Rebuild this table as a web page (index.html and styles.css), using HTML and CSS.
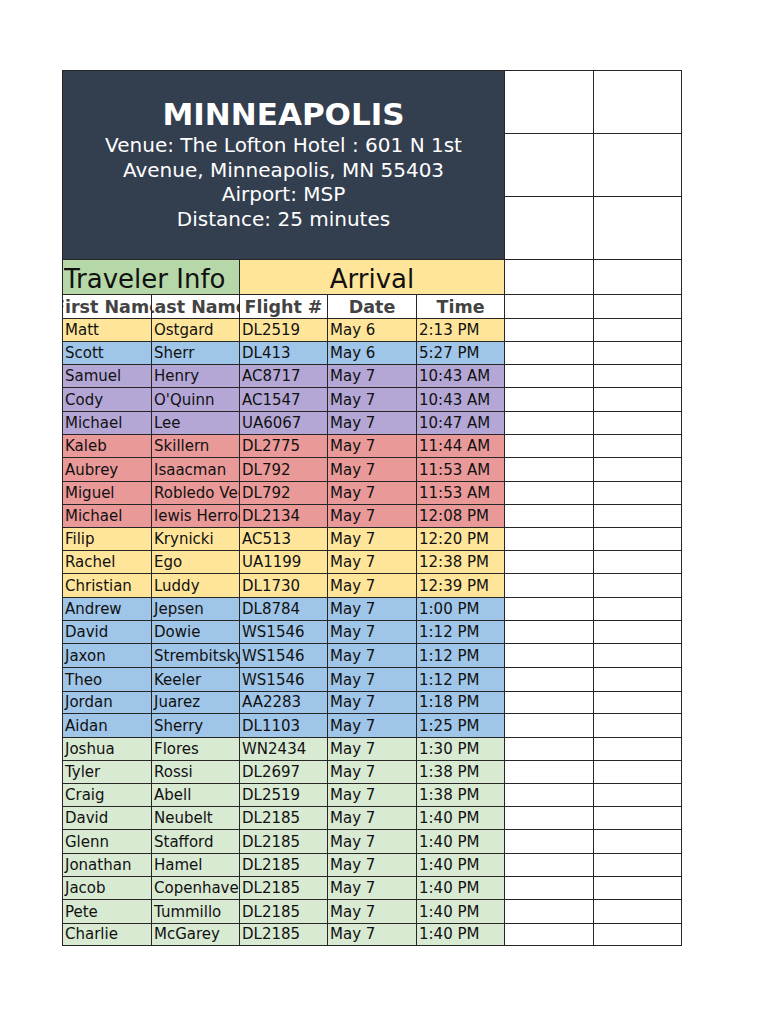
FILE: index.html
```html
<!DOCTYPE html>
<html>
<head>
<meta charset="utf-8">
<link rel="stylesheet" href="styles.css">
</head>
<body>
<div class="page">
<table class="sheet">
<colgroup>
<col class="c1"><col class="c2"><col class="c3"><col class="c4"><col class="c5"><col class="c6"><col class="c7">
</colgroup>
<tbody>
<tr class="hrow">
<td class="title" colspan="5" rowspan="3">
<div class="city">MINNEAPOLIS</div>
<div class="info">Venue: The Lofton Hotel : 601 N 1st<br>Avenue, Minneapolis, MN 55403<br>Airport: MSP<br>Distance: 25 minutes</div>
</td>
<td></td><td></td>
</tr>
<tr class="hrow"><td></td><td></td></tr>
<tr class="hrow"><td></td><td></td></tr>
<tr class="grp">
<td colspan="2" class="trav"><div class="clip">Traveler Info</div></td>
<td colspan="3" class="arr">Arrival</td>
<td></td><td></td>
</tr>
<tr class="cols">
<td><div class="clipc"><span>First Name</span></div></td>
<td><div class="clipc"><span>Last Name</span></div></td>
<td><div class="clipc"><span>Flight #</span></div></td>
<td><div class="clipc"><span>Date</span></div></td>
<td><div class="clipc"><span>Time</span></div></td>
<td></td><td></td>
</tr>
<tr class="d y"><td>Matt</td><td>Ostgard</td><td>DL2519</td><td>May 6</td><td>2:13 PM</td><td></td><td></td></tr>
<tr class="d b"><td>Scott</td><td>Sherr</td><td>DL413</td><td>May 6</td><td>5:27 PM</td><td></td><td></td></tr>
<tr class="d p"><td>Samuel</td><td>Henry</td><td>AC8717</td><td>May 7</td><td>10:43 AM</td><td></td><td></td></tr>
<tr class="d p h24"><td>Cody</td><td>O'Quinn</td><td>AC1547</td><td>May 7</td><td>10:43 AM</td><td></td><td></td></tr>
<tr class="d p"><td>Michael</td><td>Lee</td><td>UA6067</td><td>May 7</td><td>10:47 AM</td><td></td><td></td></tr>
<tr class="d r"><td>Kaleb</td><td>Skillern</td><td>DL2775</td><td>May 7</td><td>11:44 AM</td><td></td><td></td></tr>
<tr class="d r h24"><td>Aubrey</td><td>Isaacman</td><td>DL792</td><td>May 7</td><td>11:53 AM</td><td></td><td></td></tr>
<tr class="d r"><td>Miguel</td><td><div class="clip">Robledo Vega</div></td><td>DL792</td><td>May 7</td><td>11:53 AM</td><td></td><td></td></tr>
<tr class="d r"><td>Michael</td><td><div class="clip">lewis Herrod</div></td><td>DL2134</td><td>May 7</td><td>12:08 PM</td><td></td><td></td></tr>
<tr class="d y"><td>Filip</td><td>Krynicki</td><td>AC513</td><td>May 7</td><td>12:20 PM</td><td></td><td></td></tr>
<tr class="d y"><td>Rachel</td><td>Ego</td><td>UA1199</td><td>May 7</td><td>12:38 PM</td><td></td><td></td></tr>
<tr class="d y h24"><td>Christian</td><td>Luddy</td><td>DL1730</td><td>May 7</td><td>12:39 PM</td><td></td><td></td></tr>
<tr class="d b"><td>Andrew</td><td>Jepsen</td><td>DL8784</td><td>May 7</td><td>1:00 PM</td><td></td><td></td></tr>
<tr class="d b"><td>David</td><td>Dowie</td><td>WS1546</td><td>May 7</td><td>1:12 PM</td><td></td><td></td></tr>
<tr class="d b h24"><td>Jaxon</td><td><div class="clip">Strembitsky</div></td><td>WS1546</td><td>May 7</td><td>1:12 PM</td><td></td><td></td></tr>
<tr class="d b h24"><td>Theo</td><td>Keeler</td><td>WS1546</td><td>May 7</td><td>1:12 PM</td><td></td><td></td></tr>
<tr class="d b h22"><td>Jordan</td><td>Juarez</td><td>AA2283</td><td>May 7</td><td>1:18 PM</td><td></td><td></td></tr>
<tr class="d b h24"><td>Aidan</td><td>Sherry</td><td>DL1103</td><td>May 7</td><td>1:25 PM</td><td></td><td></td></tr>
<tr class="d g"><td>Joshua</td><td>Flores</td><td>WN2434</td><td>May 7</td><td>1:30 PM</td><td></td><td></td></tr>
<tr class="d g"><td>Tyler</td><td>Rossi</td><td>DL2697</td><td>May 7</td><td>1:38 PM</td><td></td><td></td></tr>
<tr class="d g"><td>Craig</td><td>Abell</td><td>DL2519</td><td>May 7</td><td>1:38 PM</td><td></td><td></td></tr>
<tr class="d g"><td>David</td><td>Neubelt</td><td>DL2185</td><td>May 7</td><td>1:40 PM</td><td></td><td></td></tr>
<tr class="d g h24"><td>Glenn</td><td>Stafford</td><td>DL2185</td><td>May 7</td><td>1:40 PM</td><td></td><td></td></tr>
<tr class="d g"><td>Jonathan</td><td>Hamel</td><td>DL2185</td><td>May 7</td><td>1:40 PM</td><td></td><td></td></tr>
<tr class="d g"><td>Jacob</td><td><div class="clip">Copenhaver</div></td><td>DL2185</td><td>May 7</td><td>1:40 PM</td><td></td><td></td></tr>
<tr class="d g h24"><td>Pete</td><td>Tummillo</td><td>DL2185</td><td>May 7</td><td>1:40 PM</td><td></td><td></td></tr>
<tr class="d g h22"><td>Charlie</td><td>McGarey</td><td>DL2185</td><td>May 7</td><td>1:40 PM</td><td></td><td></td></tr>
</tbody>
</table>
</div>
</body>
</html>
```
FILE: styles.css
```css
html, body {
  margin: 0;
  padding: 0;
  background: #ffffff;
}
.page {
  padding: 70px 0 0 62px;
}
.sheet {
  border-collapse: collapse;
  table-layout: fixed;
  width: 620px;
  font-family: "DejaVu Sans", sans-serif;
  color: #111111;
}
.c1 { width: 89px; }
.c2 { width: 88px; }
.c3 { width: 88px; }
.c4 { width: 89px; }
.c5 { width: 88px; }
.c6 { width: 89px; }
.c7 { width: 88px; }
.sheet td {
  border: 1px solid #262626;
  padding: 0;
  overflow: hidden;
  white-space: nowrap;
}
.hrow td { height: 62px; }
.title {
  background: #333e4f;
  color: #ffffff;
  text-align: center;
  vertical-align: middle;
}
.city {
  font-weight: bold;
  font-size: 31px;
  line-height: 34px;
  margin-top: 4px;
}
.info {
  font-size: 20px;
  line-height: 24.5px;
  margin-top: 2px;
  padding-bottom: 6px;
}
.grp td { height: 34px; vertical-align: bottom; }
.trav {
  background: #b6d7a8;
  font-size: 26px;
  line-height: 30px;
  padding-left: 1px !important;
}
.arr {
  background: #ffe599;
  font-size: 26px;
  line-height: 30px;
  text-align: center;
}
.clip {
  overflow: hidden;
  white-space: nowrap;
}
.cols td {
  height: 23px;
  vertical-align: bottom;
}
.clipc {
  overflow: hidden;
  display: flex;
  justify-content: center;
  font-weight: bold;
  font-size: 17.5px;
  line-height: 21px;
  color: #434343;
}
.clipc span {
  flex: none;
  white-space: nowrap;
}
.d td {
  height: 23px;
  font-size: 15px;
  line-height: 18px;
  vertical-align: bottom;
  padding: 0 0 2px 2px;
  box-sizing: border-box;
}
.d.h24 td { height: 24px; }
.d.h22 td { height: 22px; }
.y td:nth-child(-n+5) { background: #ffe599; }
.b td:nth-child(-n+5) { background: #9fc5e8; }
.p td:nth-child(-n+5) { background: #b4a7d6; }
.r td:nth-child(-n+5) { background: #ea9999; }
.g td:nth-child(-n+5) { background: #d9ead3; }
```
